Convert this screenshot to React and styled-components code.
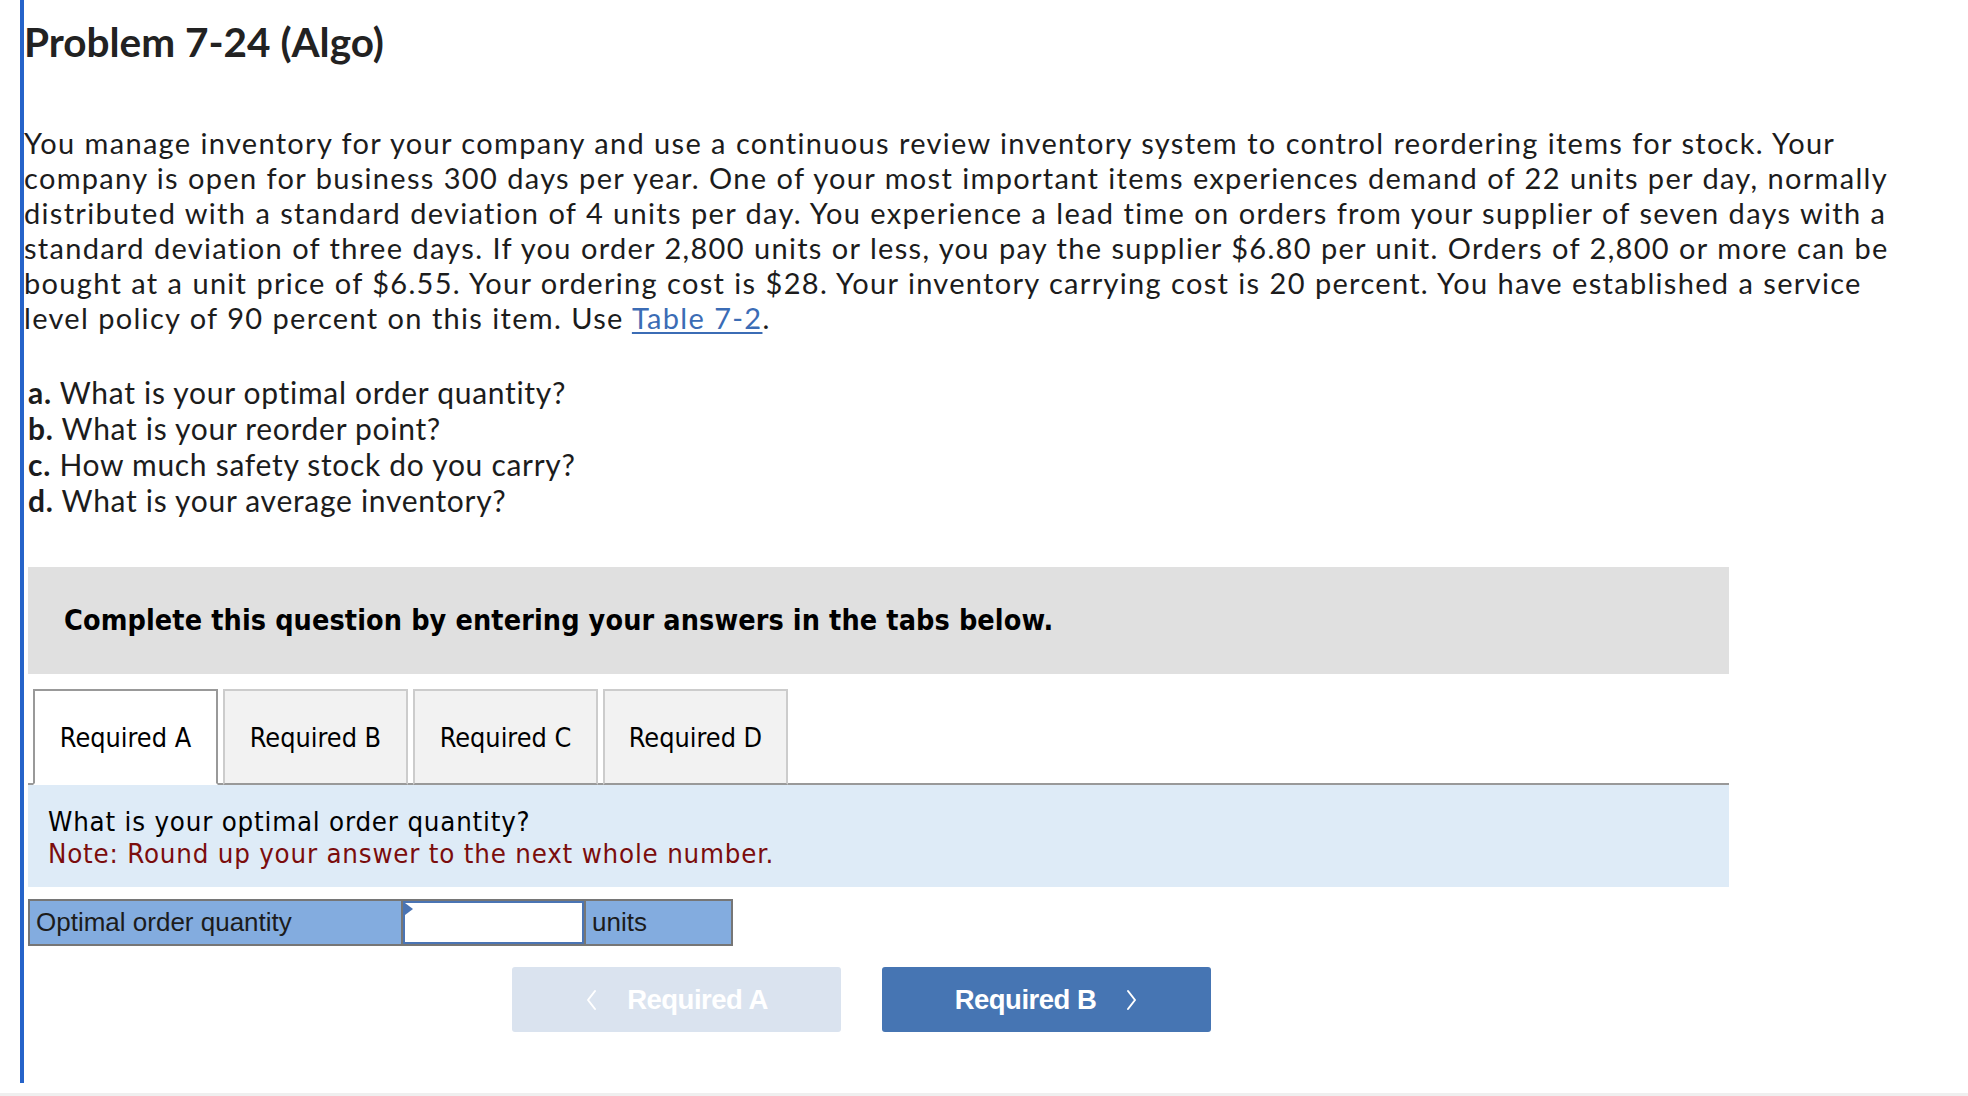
import React, { useState } from "react";
import styled, { createGlobalStyle } from "styled-components";

const GlobalStyle = createGlobalStyle`
  html, body {
    margin: 0;
    padding: 0;
    background: #ffffff;
  }
  * {
    box-sizing: border-box;
  }
`;

const TABS = ["Required A", "Required B", "Required C", "Required D"];

const PARAGRAPH = [
  "You manage inventory for your company and use a continuous review inventory system to control reordering items for stock. Your",
  "company is open for business 300 days per year. One of your most important items experiences demand of 22 units per day, normally",
  "distributed with a standard deviation of 4 units per day. You experience a lead time on orders from your supplier of seven days with a",
  "standard deviation of three days. If you order 2,800 units or less, you pay the supplier $6.80 per unit. Orders of 2,800 or more can be",
  "bought at a unit price of $6.55. Your ordering cost is $28. Your inventory carrying cost is 20 percent. You have established a service",
];

const QUESTIONS = [
  ["a.", "What is your optimal order quantity?"],
  ["b.", "What is your reorder point?"],
  ["c.", "How much safety stock do you carry?"],
  ["d.", "What is your average inventory?"],
];

function Chevron({ dir }) {
  return (
    <svg width="12" height="22" viewBox="0 0 12 22" fill="none">
      <path
        d={dir === "left" ? "M10 2 L3 11 L10 20" : "M2 2 L9 11 L2 20"}
        stroke="currentColor"
        strokeWidth="2"
        strokeLinecap="round"
        strokeLinejoin="round"
      />
    </svg>
  );
}

function App() {
  const [active, setActive] = useState(0);
  const [value, setValue] = useState("");

  return (
    <>
      <GlobalStyle />
      <S.Page>
        <S.Title>Problem 7-24 (Algo)</S.Title>

        <S.Paragraph>
          {PARAGRAPH.map((line) => (
            <S.Line key={line}>{line}</S.Line>
          ))}
          <S.Line>
            level policy of 90 percent on this item. Use <S.Link href="#">Table 7-2</S.Link>.
          </S.Line>
        </S.Paragraph>

        <S.QuestionList>
          {QUESTIONS.map(([label, text]) => (
            <li key={label}>
              <b>{label}</b> {text}
            </li>
          ))}
        </S.QuestionList>

        <S.Instruction>Complete this question by entering your answers in the tabs below.</S.Instruction>

        <S.TabBar>
          {TABS.map((tab, i) => (
            <S.Tab key={tab} $active={i === active} onClick={() => setActive(i)}>
              {tab}
            </S.Tab>
          ))}
        </S.TabBar>

        <S.Panel>
          <div>What is your optimal order quantity?</div>
          <S.Note>Note: Round up your answer to the next whole number.</S.Note>
        </S.Panel>

        <S.AnswerRow>
          <S.LabelCell>Optimal order quantity</S.LabelCell>
          <S.InputCell>
            <S.Flag />
            <input value={value} onChange={(e) => setValue(e.target.value)} />
          </S.InputCell>
          <S.UnitCell>units</S.UnitCell>
        </S.AnswerRow>

        <S.ButtonRow>
          <S.NavButton $disabled>
            <Chevron dir="left" />
            <span>Required A</span>
          </S.NavButton>
          <S.NavButton>
            <span>Required B</span>
            <Chevron dir="right" />
          </S.NavButton>
        </S.ButtonRow>
      </S.Page>
      <S.Footer />
    </>
  );
}

const S = {
  Page: styled.div`
    margin-left: 20px;
    width: 1900px;
    height: 1083px;
    border-left: 4px solid #2563c9;
    display: flex;
    flex-direction: column;
    color: #1c1c1c;
    font-family: Lato, "Liberation Sans", sans-serif;
  `,
  Title: styled.h1`
    margin: 18px 0 0 0;
    font-size: 40.5px;
    line-height: 48px;
    font-weight: 700;
    color: #222222;
  `,
  Paragraph: styled.div`
    margin-top: 59px;
    font-size: 29px;
    line-height: 35px;
    white-space: nowrap;
    letter-spacing: 1.3px;
    word-spacing: 0.4px;
  `,
  Line: styled.div``,
  Link: styled.a`
    color: #3b6cb5;
    text-decoration: underline;
    text-underline-offset: 3px;
  `,
  QuestionList: styled.ul`
    list-style: none;
    margin: 39px 0 0 0;
    padding: 0 0 0 4px;
    font-size: 30px;
    line-height: 36px;
    letter-spacing: 0.7px;

    & b {
      font-weight: 700;
    }
  `,
  Instruction: styled.div`
    margin: 49px 0 0 4px;
    width: 1701px;
    height: 107px;
    background: #e0e0e0;
    display: flex;
    align-items: center;
    padding-left: 36px;
    font-family: "DejaVu Sans Condensed", "DejaVu Sans", sans-serif;
    font-stretch: condensed;
    font-weight: 700;
    font-size: 28.5px;
    letter-spacing: 0.1px;
    color: #000000;
  `,
  TabBar: styled.div`
    margin: 15px 0 0 4px;
    width: 1701px;
    display: flex;
    gap: 5px;
    padding-left: 5px;
    border-bottom: 2px solid #999999;
  `,
  Tab: styled.div`
    width: 185px;
    height: 96px;
    margin-bottom: -2px;
    display: flex;
    align-items: center;
    justify-content: center;
    font-family: "DejaVu Sans Condensed", "DejaVu Sans", sans-serif;
    font-stretch: condensed;
    font-size: 26.8px;
    color: #000000;
    cursor: pointer;
    background: ${({ $active }) => ($active ? "#ffffff" : "#f2f2f2")};
    border: 2px solid ${({ $active }) => ($active ? "#999999" : "#cccccc")};
    border-bottom: 2px solid ${({ $active }) => ($active ? "#ffffff" : "#999999")};
  `,
  Panel: styled.div`
    margin-left: 4px;
    width: 1701px;
    background: #deebf7;
    padding: 21px 0 17px 20px;
    font-family: "DejaVu Sans Condensed", "DejaVu Sans", sans-serif;
    font-stretch: condensed;
    font-size: 27.4px;
    line-height: 32px;
    letter-spacing: 0.8px;
    color: #000000;
  `,
  Note: styled.div`
    color: #7b0d0d;
  `,
  AnswerRow: styled.div`
    margin: 12px 0 0 4px;
    width: 705px;
    height: 47px;
    display: flex;
    border: 2px solid #767676;
    font-family: "Liberation Sans", Arial, sans-serif;
    font-size: 26px;
    color: #1c1c1c;
  `,
  LabelCell: styled.div`
    width: 373px;
    background: #83acdf;
    display: flex;
    align-items: center;
    padding-left: 6px;
    border-right: 2px solid #767676;
  `,
  InputCell: styled.div`
    position: relative;
    width: 183px;
    background: #ffffff;
    border-right: 2px solid #767676;
    display: flex;

    & input {
      width: 100%;
      height: 100%;
      border: 2px solid #4a74b4;
      outline: none;
      font-size: 22px;
      font-family: inherit;
      padding: 0 8px;
    }
  `,
  Flag: styled.span`
    position: absolute;
    left: 2px;
    top: 2px;
    width: 0;
    height: 0;
    border-top: 6px solid transparent;
    border-bottom: 6px solid transparent;
    border-left: 8px solid #4a74b4;
  `,
  UnitCell: styled.div`
    flex: 1;
    background: #83acdf;
    display: flex;
    align-items: center;
    padding-left: 6px;
  `,
  ButtonRow: styled.div`
    margin: 21px 0 0 488px;
    display: flex;
    gap: 41px;
  `,
  NavButton: styled.button`
    width: 329px;
    height: 65px;
    border: none;
    border-radius: 3px;
    display: flex;
    align-items: center;
    justify-content: center;
    gap: 30px;
    font-family: "Liberation Sans", Arial, sans-serif;
    font-weight: 700;
    font-size: 27.5px;
    letter-spacing: -0.5px;
    color: #ffffff;
    cursor: ${({ $disabled }) => ($disabled ? "default" : "pointer")};
    background: ${({ $disabled }) => ($disabled ? "#dae3ef" : "#4675b3")};
  `,
  Footer: styled.div`
    margin-top: 10px;
    height: 4px;
    background: #efefef;
  `,
};

export default App;
